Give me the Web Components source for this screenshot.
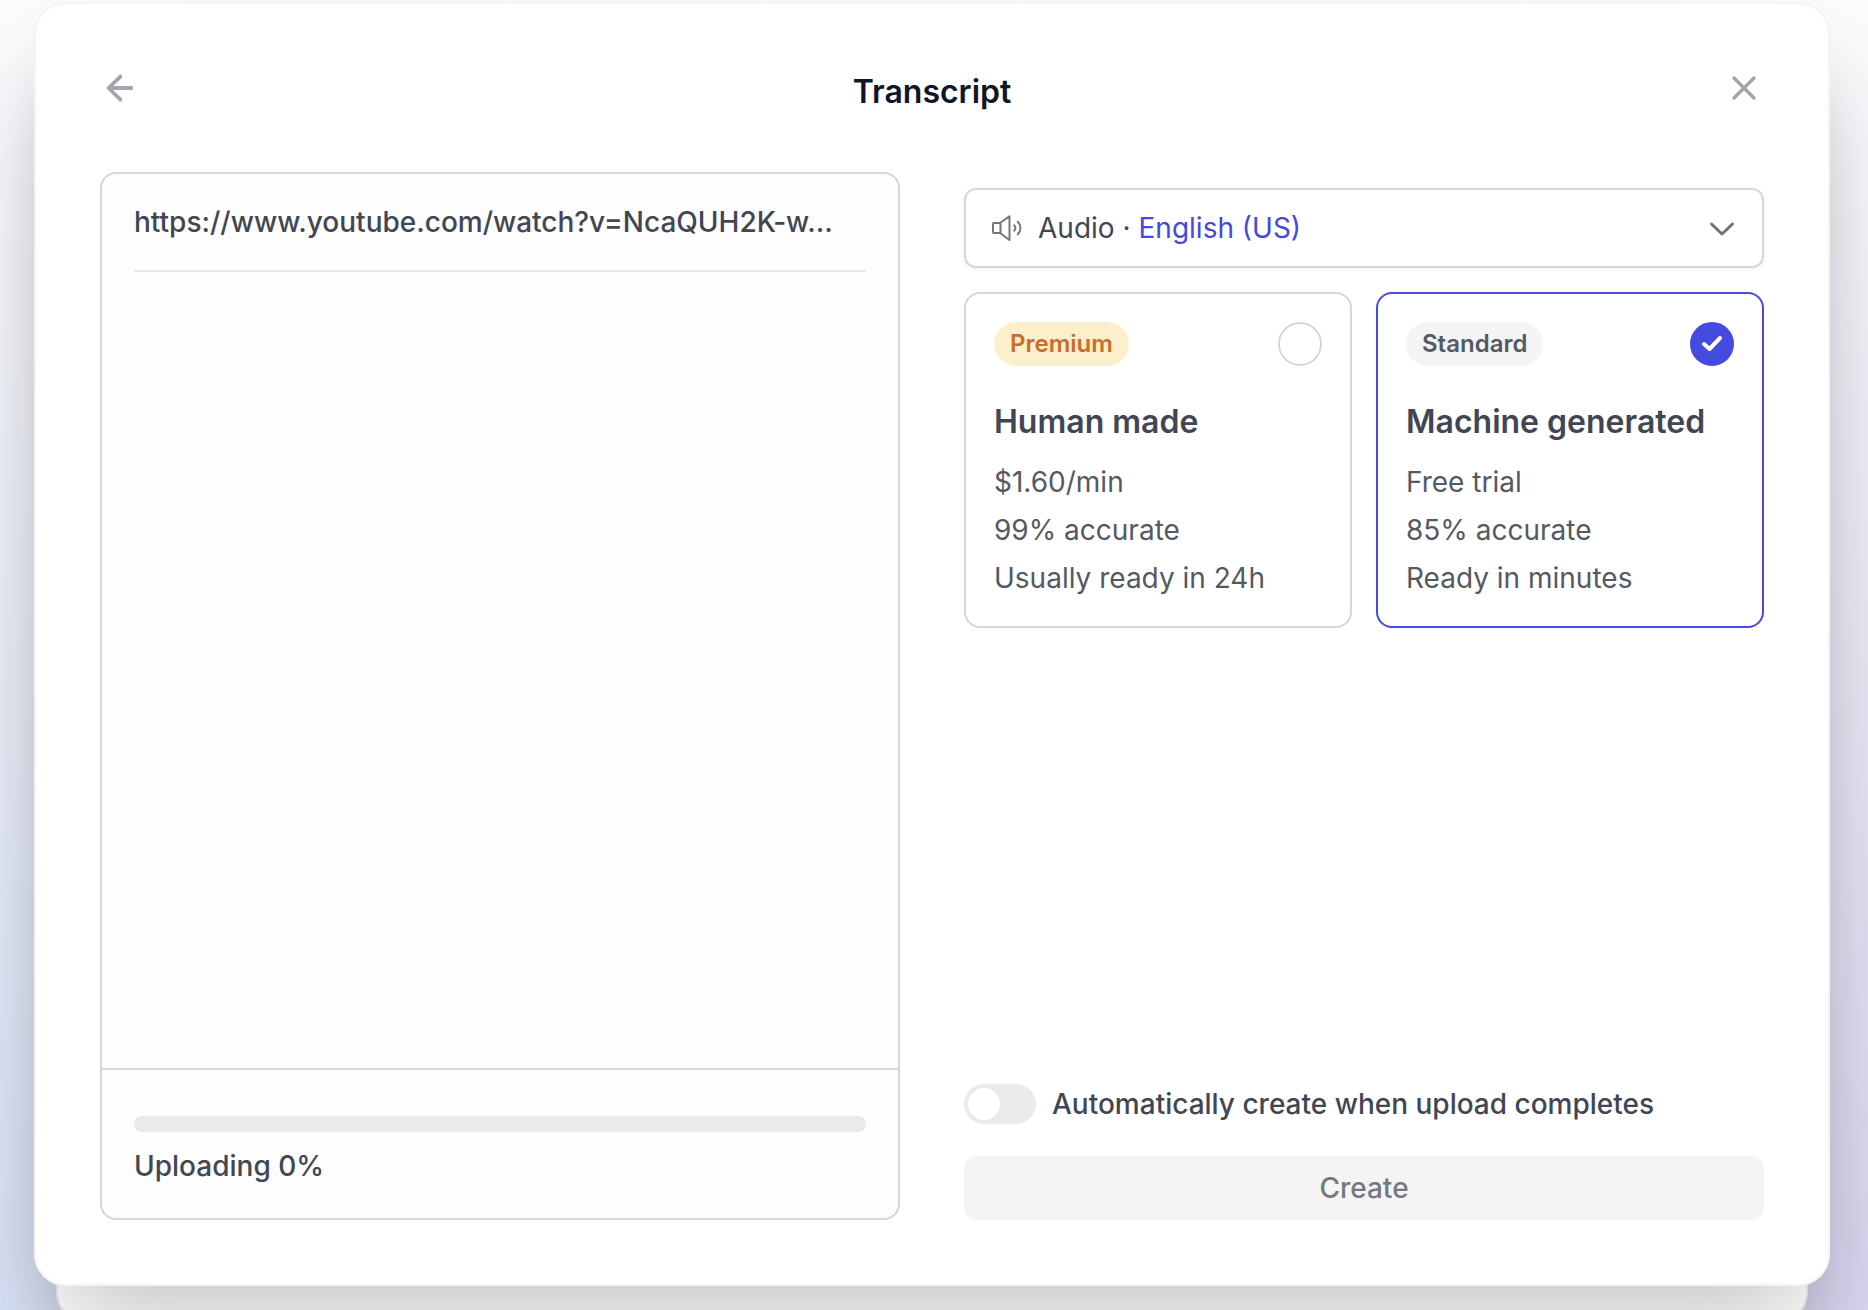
<!DOCTYPE html>
<html lang="en">
<head>
<meta charset="utf-8">
<meta name="viewport" content="width=device-width, initial-scale=1">
<title>Transcript</title>
<style>
  * { box-sizing: border-box; }
  body {
    margin: 0;
    font-family: Inter, "Liberation Sans", sans-serif;
    font-size: 28px;
    line-height: 40px;
    color: #424652;
    background:
      linear-gradient(to bottom, #fcfcfe 0%, rgba(248, 248, 251, 0.7) 40%, rgba(248, 248, 252, 0) 100%),
      linear-gradient(to right, #d8e2f6, #dad5f0);
  }
</style>
</head>
<body>
<transcript-dialog heading="Transcript">
  <upload-panel slot="source" percent="0">https://www.youtube.com/watch?v=NcaQUH2K-w…</upload-panel>
  <language-select slot="options" label="Audio ·">English (US)</language-select>
  <plan-group slot="options">
    <plan-card tier="Premium" tone="amber" heading="Human made">
      <li>$1.60/min</li>
      <li>99% accurate</li>
      <li>Usually ready in 24h</li>
    </plan-card>
    <plan-card tier="Standard" heading="Machine generated" checked>
      <li>Free trial</li>
      <li>85% accurate</li>
      <li>Ready in minutes</li>
    </plan-card>
  </plan-group>
  <toggle-switch slot="actions">Automatically create when upload completes</toggle-switch>
  <submit-button slot="actions" disabled>Create</submit-button>
</transcript-dialog>

<script>
const baseStyles = /*css*/ `
  *, *::before, *::after { box-sizing: border-box; }
  button, input, select { font: inherit; color: inherit; margin: 0; }
  svg { display: block; fill: none; stroke: currentColor; stroke-linecap: round; stroke-linejoin: round; }
`;

class BaseElement extends HTMLElement {
  constructor() {
    super();
    const template = document.createElement("template");
    template.innerHTML = `<style>${baseStyles}</style>${this.constructor.markup}`;
    this.attachShadow({ mode: "open" });
    this.shadowRoot.append(template.content.cloneNode(true));
  }

  $(selector) {
    return this.shadowRoot.querySelector(selector);
  }
}

class TranscriptDialog extends BaseElement {
  static markup = /*html*/ `
    <style>
      :host {
        display: flex;
        position: relative;
        min-height: 100vh;
        padding: 2px 38px 24px 34px;
        overflow: hidden;
        --shadow: 0 50px 100px -24px rgba(0, 0, 0, 0.25);
      }
      .behind {
        position: absolute;
        inset: 40px 60px -14px 56px;
        border: 2px solid #ececec;
        border-radius: 32px;
        background: #fff;
        box-shadow: var(--shadow);
      }
      .dialog {
        position: relative;
        flex: 1;
        display: flex;
        flex-direction: column;
        gap: 56px;
        min-width: 0;
        padding: 64px;
        border: 2px solid #f4f4f5;
        border-radius: 32px;
        background: #fff;
        box-shadow: var(--shadow);
      }
      header {
        display: flex;
        justify-content: space-between;
        align-items: flex-start;
      }
      h1 {
        margin: 0;
        font-size: 32px;
        line-height: 48px;
        font-weight: 600;
        color: #111626;
      }
      header button {
        padding: 0;
        border: 0;
        background: none;
        color: #a3a5ad;
        cursor: pointer;
      }
      .columns {
        flex: 1;
        display: grid;
        grid-template-columns: minmax(0, 1fr) minmax(0, 1fr);
        gap: 64px;
      }
      .right {
        display: flex;
        flex-direction: column;
        justify-content: space-between;
        gap: 32px;
        padding-top: 16px;
      }
      .options { display: grid; gap: 24px; }
      .actions { display: grid; gap: 32px; }
    </style>
    <div class="behind"></div>
    <section class="dialog" role="dialog" aria-labelledby="title">
      <header>
        <button type="button" aria-label="Back">
          <svg width="40" height="40" viewBox="0 0 40 40" stroke-width="3.8"><path d="M31.400 20H8.600M20.400 8.600L8.600 20L20.400 31.600"/></svg>
        </button>
        <h1 id="title"></h1>
        <button type="button" aria-label="Close">
          <svg width="40" height="40" viewBox="0 0 40 40" stroke-width="3.400"><path d="M10 10L30 30M30 10L10 30"/></svg>
        </button>
      </header>
      <div class="columns">
        <slot name="source"></slot>
        <div class="right">
          <div class="options"><slot name="options"></slot></div>
          <div class="actions"><slot name="actions"></slot></div>
        </div>
      </div>
    </section>
  `;

  connectedCallback() {
    this.$("h1").textContent = this.getAttribute("heading");
  }
}

class UploadPanel extends BaseElement {
  static markup = /*html*/ `
    <style>
      :host {
        display: flex;
        flex-direction: column;
        justify-content: space-between;
        border: 2px solid #d5d6da;
        border-radius: 16px;
        background: #fdfdfd;
        font-weight: 500;
      }
      .name {
        margin: 0 32px;
        padding: 28px 0;
        border-bottom: 2px solid #e7e8ea;
        overflow: hidden;
        white-space: nowrap;
      }
      .status {
        display: grid;
        gap: 14px;
        padding: 46px 32px 32px;
        border-top: 2px solid #d5d6da;
      }
      progress {
        appearance: none;
        display: block;
        width: 100%;
        height: 16px;
        border: 0;
        border-radius: 8px;
        overflow: hidden;
        background: #e8eaeb;
      }
      progress::-webkit-progress-bar { background: #e8eaeb; }
      progress::-webkit-progress-value { background: #464bdf; }
    </style>
    <div class="name"><slot></slot></div>
    <div class="status">
      <progress id="bar" max="100" value="0"></progress>
      <label for="bar"></label>
    </div>
  `;

  static get observedAttributes() {
    return ["percent"];
  }

  attributeChangedCallback(name, oldVal, newVal) {
    this.$("progress").value = Number(newVal);
    this.$("label").textContent = `Uploading ${newVal}%`;
  }
}

class LanguageSelect extends BaseElement {
  static markup = /*html*/ `
    <style>
      :host {
        display: flex;
        align-items: center;
        position: relative;
        padding: 18px 24px;
        border: 2px solid #d5d6da;
        border-radius: 12px;
        background: #fff;
        box-shadow: 0 2px 4px rgba(0, 0, 0, 0.05);
      }
      .speaker { margin-right: 16px; color: #74777f; }
      label { margin-right: 8px; }
      select {
        appearance: none;
        flex: 1;
        min-width: 0;
        height: 40px;
        padding: 0;
        border: 0;
        outline: none;
        background: none;
        color: #4549de;
      }
      .chevron { color: #6d717c; pointer-events: none; }
    </style>
    <svg class="speaker" width="32" height="32" viewBox="0 0 32 32" stroke-width="2"><path d="M4 11H10L19.500 4.200V28L10 21H4A1 1 0 0 1 3 20V12A1 1 0 0 1 4 11ZM10.500 11V21M24.200 13.200C25.500 14.800 25.500 17.200 24.200 18.800M27.800 9.800C31.400 13.200 31.400 18.800 27.800 22.200"/></svg>
    <label for="language"></label>
    <select id="language"><option></option></select>
    <svg class="chevron" width="32" height="32" viewBox="0 0 32 32" stroke-width="3"><path d="M5.500 12L16 22L26.500 12"/></svg>
  `;

  connectedCallback() {
    this.$("label").textContent = this.getAttribute("label");
    this.$("option").textContent = this.textContent.trim();
  }
}

class PlanGroup extends BaseElement {
  static markup = /*html*/ `
    <style>
      :host {
        display: grid;
        grid-template-columns: repeat(2, minmax(0, 1fr));
        gap: 24px;
      }
    </style>
    <slot></slot>
  `;

  connectedCallback() {
    // each radio sits in its own shadow root, so the group is kept here
    this.addEventListener("plan-change", (event) => {
      this.querySelectorAll("plan-card").forEach((card) => {
        card.toggleAttribute("checked", card === event.target);
      });
    });
  }
}

class PlanCard extends BaseElement {
  static markup = /*html*/ `
    <style>
      :host { display: block; }
      label {
        display: block;
        padding: 28px 28px 24px;
        border: 2px solid #d5d6da;
        border-radius: 16px;
        color: #555962;
        cursor: pointer;
      }
      :host([checked]) label { border-color: #464bdf; }
      .top {
        display: flex;
        justify-content: space-between;
        align-items: center;
      }
      .badge {
        padding: 2px 16px;
        border-radius: 22px;
        background: #f4f4f5;
        font-size: 24px;
        font-weight: 600;
      }
      :host([tone="amber"]) .badge { background: #fcefcb; color: #cb6c2b; }
      .radio { display: grid; }
      .radio > * { grid-area: 1 / 1; }
      input {
        appearance: none;
        width: 44px;
        height: 44px;
        border: 2px solid #d5d6da;
        border-radius: 50%;
        background: #fff;
        cursor: pointer;
      }
      input:checked { border-color: #464bdf; background: #464bdf; }
      svg { color: #fff; pointer-events: none; visibility: hidden; }
      :host([checked]) svg { visibility: visible; }
      h2 {
        margin: 32px 0 12px;
        font-size: 32px;
        line-height: 48px;
        font-weight: 600;
        color: #424652;
      }
      ul {
        margin: 0;
        padding: 0;
        list-style: none;
        line-height: 48px;
      }
    </style>
    <label>
      <div class="top">
        <span class="badge"></span>
        <span class="radio">
          <input type="radio">
          <svg width="44" height="44" viewBox="0 0 44 44" stroke-width="4"><path d="M14 22L19.500 27L30 16"/></svg>
        </span>
      </div>
      <h2></h2>
      <ul><slot></slot></ul>
    </label>
  `;

  static get observedAttributes() {
    return ["checked"];
  }

  connectedCallback() {
    this.$(".badge").textContent = this.getAttribute("tier");
    this.$("h2").textContent = this.getAttribute("heading");
    this.$("input").addEventListener("change", () => {
      this.dispatchEvent(new CustomEvent("plan-change", { bubbles: true }));
    });
  }

  attributeChangedCallback() {
    this.$("input").checked = this.hasAttribute("checked");
  }
}

class ToggleSwitch extends BaseElement {
  static markup = /*html*/ `
    <style>
      :host { display: block; font-weight: 500; }
      label {
        display: flex;
        align-items: center;
        gap: 16px;
        cursor: pointer;
      }
      input {
        appearance: none;
        display: flex;
        flex: none;
        width: 72px;
        height: 40px;
        padding: 4px;
        border-radius: 20px;
        background: #e8eaeb;
        cursor: pointer;
      }
      input::before {
        content: "";
        width: 32px;
        height: 32px;
        border-radius: 50%;
        background: #fff;
      }
      input:checked { justify-content: flex-end; background: #464bdf; }
    </style>
    <label><input type="checkbox" role="switch"><span><slot></slot></span></label>
  `;
}

class SubmitButton extends BaseElement {
  static markup = /*html*/ `
    <style>
      :host { display: block; }
      button {
        width: 100%;
        padding: 12px 32px;
        border: 0;
        border-radius: 12px;
        background: #464bdf;
        color: #fff;
        font-weight: 500;
      }
      button:disabled { background: #f4f4f5; color: #747881; }
    </style>
    <button type="button"><slot></slot></button>
  `;

  connectedCallback() {
    this.$("button").disabled = this.hasAttribute("disabled");
  }
}

customElements.define("transcript-dialog", TranscriptDialog);
customElements.define("upload-panel", UploadPanel);
customElements.define("language-select", LanguageSelect);
customElements.define("plan-group", PlanGroup);
customElements.define("plan-card", PlanCard);
customElements.define("toggle-switch", ToggleSwitch);
customElements.define("submit-button", SubmitButton);
</script>
</body>
</html>
